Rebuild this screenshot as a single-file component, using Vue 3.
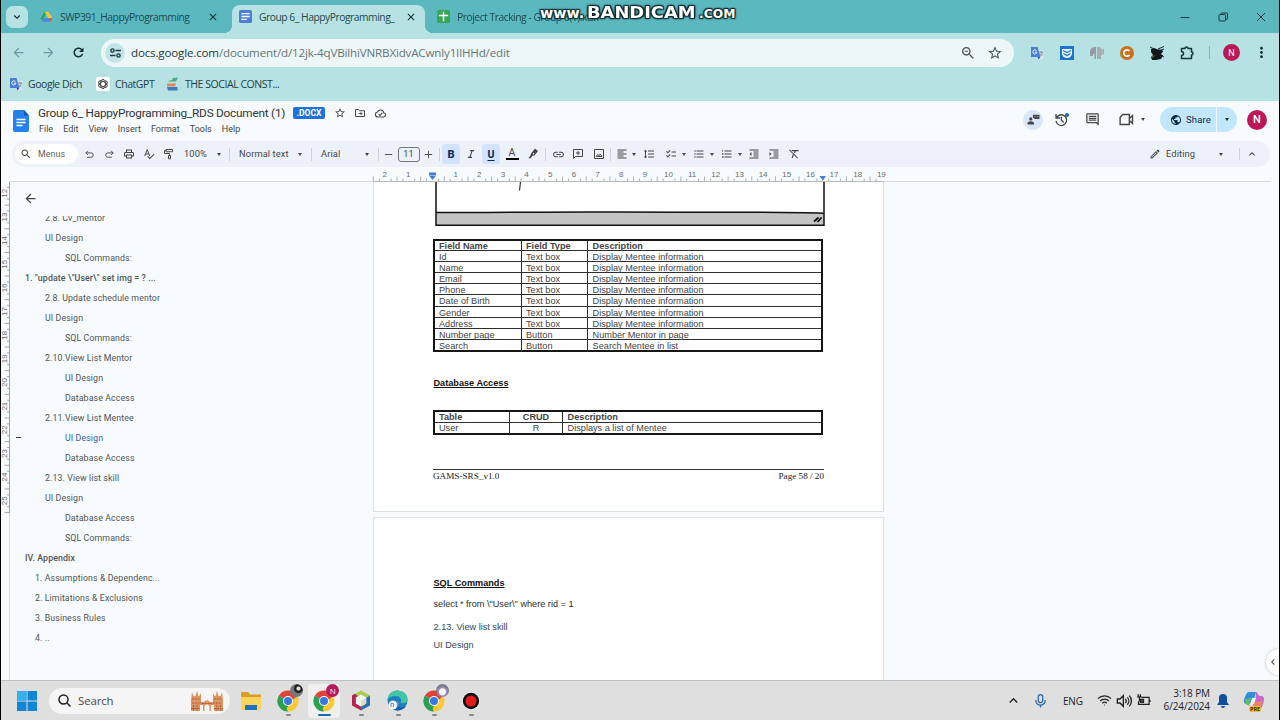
<template>
  <div class="screen">
    <!-- tab strip -->
    <div class="tab-strip">
      <button class="tab-search"><Ico name="expand" :size="12" /></button>
      <div class="tab first">
        <svg class="favicon" viewBox="0 0 24 24">
          <path fill="#2aa35a" d="M8 3h4l-7.500 18L1 15.500z" />
          <path fill="#f6c33c" d="M8.500 3h7L23 15h-7.500z" />
          <path fill="#4a86e8" d="M8 15h15l-4 6.500H4.500z" />
          <path fill="#e2583e" d="M16 15h7l-4 6.500z" />
        </svg>
        <span class="tab-title">SWP391_HappyProgramming</span>
        <Ico name="close" :size="12" />
      </div>
      <div class="tab active">
        <svg class="favicon" viewBox="0 0 14 14">
          <rect width="14" height="14" rx="2" fill="#4b7fd6" />
          <path d="M2.500 4h9M2.500 7h9M2.500 10h6" stroke="#fff" stroke-width="1.400" />
        </svg>
        <span class="tab-title">Group 6_ HappyProgramming_</span>
        <Ico name="close" :size="12" />
      </div>
      <div class="tab third">
        <svg class="favicon" viewBox="0 0 14 14">
          <rect width="14" height="14" rx="2" fill="#35a853" />
          <path d="M2 6h10M7 2v10" stroke="#fff" stroke-width="1.600" />
        </svg>
        <span class="tab-title">Project Tracking - Group 6(1).xlsx</span>
      </div>
      <div class="watermark">
        <span class="wm-www">www.</span><span class="wm-name">BANDICAM</span><span class="wm-com">.COM</span>
      </div>
      <div class="window-buttons">
        <svg viewBox="0 0 12 12"><path d="M1.500 6.500h9" /></svg>
        <svg viewBox="0 0 12 12">
          <rect x="2" y="3.500" width="6.500" height="6.500" rx="1" />
          <path d="M4 3.500V3a1 1 0 011-1h4.500a1 1 0 011 1v4.500a1 1 0 01-1 1H9" />
        </svg>
        <svg viewBox="0 0 12 12"><path d="M2 2l8 8M10 2l-8 8" /></svg>
      </div>
    </div>

    <!-- address bar -->
    <div class="nav-bar">
      <Ico name="back" :size="15" class="dim" />
      <Ico name="forward" :size="15" class="dim" />
      <Ico name="reload" :size="15" />
      <div class="omnibox">
        <span class="site-info">
          <svg width="11" height="10" viewBox="0 0 11 10">
            <g fill="none" stroke="#1f3a3c" stroke-width="1.400">
              <circle cx="2.500" cy="2.500" r="1.600" />
              <path d="M5.500 2.500H11M0 7.500h5.500" />
              <circle cx="8.500" cy="7.500" r="1.600" />
            </g>
          </svg>
        </span>
        <span class="url"><b>docs.google.com</b>/document/d/12jk-4qVBilhiVNRBXidvACwnly1IlHHd/edit</span>
        <Ico name="zoomOut" :size="16" />
        <Ico name="star" :size="16" />
      </div>
      <div class="extensions">
        <TranslateIcon />
        <svg viewBox="0 0 14 14">
          <rect width="14" height="14" fill="#1d74cf" />
          <path d="M2 3h10v4.500a5 4.500 0 01-10 0z" fill="#e8f4ff" />
          <path d="M3 4.500l4 2 4-2M3.500 7.500L7 9.500l3.500-2" fill="none" stroke="#1d74cf" stroke-width="1.200" />
        </svg>
        <svg viewBox="0 0 14 14">
          <path d="M6 1v12H4.500V8H3v2H0V6a5 5 0 016-5z" fill="#939a9d" />
          <path d="M7 1c4-.500 5 2 5.500 4v4H11v4H7z" fill="#a9adb0" />
          <path d="M13.300 3v5" stroke="#939a9d" />
        </svg>
        <svg viewBox="0 0 14 14">
          <circle cx="7" cy="7" r="7" fill="#c9701a" />
          <path d="M9.500 5a3.200 3.200 0 100 4" fill="none" stroke="#fff" stroke-width="1.700" />
        </svg>
        <svg viewBox="0 0 14 14">
          <path d="M1 3l3-1 4 1.500h4l1 2-2 2.500 2 2-2 3-5 1H2l-1-3 2-2-2-3z" fill="#111a1b" />
          <path d="M8 3l6-2.500M10 5l4-2M0 1l3 1.500M12 9l2 2.500" stroke="#223" />
          <path d="M2.500 11.500l1.500-2" stroke="#e0905c" />
        </svg>
        <svg viewBox="0 0 14 14">
          <path
            d="M1.500 2.500h3.500a1.500 1.500 0 013 0h3.500v3.500a1.500 1.500 0 010 3v3.500h-10v-3a2 2 0 000-4z"
            fill="none"
            stroke="#173537"
            stroke-width="1.500"
            stroke-linejoin="round"
          />
        </svg>
      </div>
      <span class="bar-sep"></span>
      <span class="avatar small">N</span>
      <Ico name="more" :size="17" class="more" />
    </div>

    <!-- bookmarks -->
    <div class="bookmarks">
      <TranslateIcon />
      <span class="bm-dich">Google Dịch</span>
      <svg viewBox="0 0 14 14">
        <rect width="14" height="14" rx="2" fill="#fff" />
        <g fill="none" stroke="#3c4143" stroke-width=".9">
          <ellipse cx="7" cy="7" rx="2.400" ry="4.700" />
          <ellipse cx="7" cy="7" rx="2.400" ry="4.700" transform="rotate(60 7 7)" />
          <ellipse cx="7" cy="7" rx="2.400" ry="4.700" transform="rotate(120 7 7)" />
        </g>
      </svg>
      <span class="bm-gpt">ChatGPT</span>
      <svg viewBox="0 0 14 14">
        <path d="M2 4l4-1 1-2 5-.500-2 4H3z" fill="#52a884" />
        <path d="M1 6.500h9l-1 3H1z" fill="#e08657" />
        <path d="M1 10h10.500v3.500H2z" fill="#3f7cc4" />
      </svg>
      <span class="bm-social">THE SOCIAL CONST...</span>
    </div>

    <!-- document header -->
    <div class="doc-header">
      <svg class="doc-logo" viewBox="0 0 16 22">
        <path d="M2 0h9l5 5.500V20a2 2 0 01-2 2H2a2 2 0 01-2-2V2a2 2 0 012-2z" fill="#2680ea" />
        <path d="M11 0l5 5.500h-5z" fill="#1457b8" />
        <path d="M3.500 9.500h9M3.500 12.500h9M3.500 15.500h6" stroke="#fff" stroke-width="1.300" />
      </svg>
      <div class="doc-names">
        <div class="title-row">
          <span class="doc-title">Group 6_ HappyProgramming_RDS Document (1)</span>
          <span class="docx">.DOCX</span>
          <Ico name="star" :size="12" />
          <Ico name="folder" :size="12" stroked />
          <Ico name="cloud" :size="13" stroked />
        </div>
        <div class="menu-row">
          <span v-for="item in menus" :key="item">{{ item }}</span>
        </div>
      </div>
      <div class="header-actions">
        <span class="presence"><Ico name="present" :size="13" /></span>
        <span class="history"><Ico name="history" :size="16" /></span>
        <Ico name="chat" :size="15" />
        <Ico name="camera" :size="17" stroked class="camera" />
        <i class="caret"></i>
        <div class="share">
          <Ico name="globe" :size="12" />
          <span class="share-text">Share</span>
          <span class="share-more"><i class="caret"></i></span>
        </div>
        <span class="avatar large">N</span>
      </div>
    </div>

    <!-- formatting toolbar -->
    <div class="toolbar">
      <div class="menus-chip"><Ico name="search" :size="12" />Menus</div>
      <span v-for="name in ['undo', 'redo']" :key="name" class="tb arrow"><Ico :name="name" :size="11" stroked /></span>
      <span v-for="name in ['print', 'spell']" :key="name" class="tb"><Ico :name="name" :size="12" /></span>
      <span class="tb"><Ico name="paint" :size="12" stroked /></span>
      <div class="group zoom"><span>100%</span><i class="caret"></i></div>
      <div class="group style"><span>Normal text</span><i class="caret"></i></div>
      <div class="group font"><span>Arial</span><i class="caret"></i></div>
      <div class="group size">
        <Ico name="minus" :size="11" /><span class="size-box">11</span><Ico name="plus" :size="11" />
      </div>
      <div class="group marks">
        <span class="tb on bold">B</span>
        <span class="tb"><Ico name="italic" :size="12" /></span>
        <span class="tb on under">U</span>
        <span class="tb colour"><span>A</span></span>
        <span class="tb"><Ico name="marker" :size="12" /></span>
      </div>
      <div class="group insert">
        <span class="tb"><Ico name="link" :size="13" /></span>
        <span class="tb"><Ico name="addComment" :size="12" stroked /></span>
        <span class="tb picture"><Ico name="image" :size="12" stroked /></span>
      </div>
      <div class="group para">
        <span class="tb"><Ico name="align" :size="12" /></span><i class="caret"></i>
        <span class="tb spacing"><Ico name="lineHeight" :size="12" /></span>
        <span class="tb check"><Ico name="checklist" :size="12" /></span><i class="caret"></i>
        <span class="tb list"><Ico name="bullets" :size="12" /></span><i class="caret"></i>
        <span class="tb list"><Ico name="numbers" :size="12" /></span><i class="caret"></i>
        <span class="tb outdent"><Ico name="outdent" :size="12" /></span>
        <span class="tb"><Ico name="indent" :size="12" /></span>
        <span class="tb"><Ico name="clear" :size="12" /></span>
      </div>
      <div class="mode">
        <Ico name="edit" :size="12" /><span>Editing</span><i class="caret"></i>
        <span class="collapse"><Ico name="collapse" :size="12" /></span>
      </div>
    </div>

    <!-- horizontal ruler -->
    <svg class="h-ruler" width="1278" height="15" viewBox="1 167 1278 15">
      <g stroke="#9aa0a3" stroke-width=".8">
        <path v-for="t in hTicks" :key="t.pos" :d="`M${t.pos} 181v-${t.len}`" />
      </g>
      <text v-for="n in hNumbers" :key="n.x" :x="n.x" y="177" class="ruler-number">{{ n.label }}</text>
      <path d="M9 181.500H373M884 181.500h387" stroke="#d3dadb" />
      <path d="M373 181.500h511" stroke="#b4bbbd" />
      <path d="M429 172.500h7v3l-3.500 4.500-3.500-4.500z" fill="#3d7fd0" />
      <path d="M429 175.500h7" stroke="#b7d3f2" stroke-width=".7" />
      <path d="M819.500 176h6.500l-3.250 4.500z" fill="#3d7fd0" />
    </svg>

    <!-- workspace -->
    <div class="workspace">
      <svg class="v-ruler" width="9" height="498" viewBox="1 182 9 498">
        <g stroke="#8f9699" stroke-width=".8">
          <path v-for="t in vTicks" :key="t.pos" :d="`M10 ${t.pos}h-${t.len}`" />
        </g>
        <text
          v-for="n in vNumbers"
          :key="n.y"
          :transform="`translate(6.500 ${n.y}) rotate(-90)`"
          class="ruler-number"
        >{{ n.label }}</text>
        <path d="M9.500 182v331" stroke="#9aa1a3" />
        <path d="M9.500 513v167" stroke="#dadfe0" />
      </svg>

      <aside class="outline">
        <Ico name="back" :size="15" class="outline-back" />
        <div class="outline-list">
          <div
            v-for="(item, i) in outline"
            :key="i"
            :class="['outline-item', 'level-' + item.level, { current: item.current }]"
          >{{ item.text }}</div>
        </div>
      </aside>

      <main class="pages">
        <section class="page page-one">
          <svg class="sketch" width="392" height="45" viewBox="434 182 392 45">
            <path d="M436 212.500c60 .700 90-.900 180-.500s150-.300 208 1V225l-388 .300z" fill="#c4c4c4" />
            <path
              d="M436 182v43.300c130-.600 250 .500 388-.100V182M436 212.400c60 .700 90-.800 180-.400s150-.400 208 1.200"
              fill="none"
              stroke="#111"
              stroke-width="1.500"
            />
            <path d="M814 221.500l4.500-4M817.500 222l4-4.500" stroke="#111" stroke-width="1.700" />
            <path d="M520.500 182l-1 8.500" stroke="#333" stroke-width="1.200" />
          </svg>

          <div class="grid fields">
            <div v-for="(row, i) in fields" :key="i" :class="['row', { head: i === 0 }]">
              <span v-for="(cell, j) in row" :key="j">{{ cell }}</span>
            </div>
          </div>

          <h4 class="heading">Database Access</h4>

          <div class="grid access">
            <div class="row head"><span>Table</span><span>CRUD</span><span>Description</span></div>
            <div class="row"><span>User</span><span>R</span><span>Displays a list of Mentee</span></div>
          </div>

          <footer class="page-footer"><span>GAMS-SRS_v1.0</span><span>Page 58 / 20</span></footer>
        </section>

        <section class="page page-two">
          <h4 class="heading">SQL Commands</h4>
          <p class="query">select * from \"User\" where rid = 1</p>
          <p class="sub">2.13. View list skill</p>
          <p class="sub last">UI Design</p>
        </section>
      </main>
      <button class="side-toggle"><Ico name="left" :size="12" /></button>
    </div>

    <!-- taskbar -->
    <div class="taskbar">
      <svg class="windows" viewBox="0 0 20 20">
        <path d="M0 0h9.500v9.500H0zM10.500 0H20v9.500h-9.500zM0 10.500h9.500V20H0zM10.500 10.500H20V20h-9.500z" fill="#1485d6" />
        <path d="M0 0h9.500v9.500H0z" fill="#35b2ee" />
      </svg>
      <div class="task-search">
        <svg width="13" height="13" viewBox="0 0 13 13" fill="none" stroke="#222" stroke-width="1.500">
          <circle cx="5.500" cy="5.500" r="4.500" /><path d="M9 9l3.500 3.500" />
        </svg>
        <span>Search</span>
        <svg class="castle" viewBox="0 0 34 20">
          <path
            d="M1 20V9L2 1l1.500 4h2L7 0l1.500 5h1L11 2v9h3a3.500 3.500 0 016 0h3V2l1.500 3h1L27 0l1.500 5h2L32 1l1 8v11h-9v-6h-3v6h-1.500v-4a2.500 2.500 0 00-5 0v4H13v-6h-3v6z"
            fill="#dd9662"
          />
          <path
            d="M2 8h8M24 8h8M2 12h9M23 12h9M3.500 14v6M7 14v6M27 14v6M30.500 14v6M12 12.500h10M1 17.500h9M24 17.500h9"
            stroke="#a9532f"
            stroke-width=".9"
            stroke-dasharray="2 .8"
          />
        </svg>
      </div>
      <div class="apps">
        <div class="app">
          <svg width="22" height="20" viewBox="0 0 22 20">
            <path d="M1 2a1 1 0 011-1h6l2 2.500h10a1 1 0 011 1V18H1z" fill="#d99e23" />
            <path d="M1 6h20v11.500a1.500 1.500 0 01-1.500 1.500h-17A1.500 1.500 0 011 17.500z" fill="#fbd45c" />
            <path d="M5 14h12v5H5z" fill="#1f70bd" />
          </svg>
        </div>
        <div class="app running"><ChromeIcon /><span class="badge dark"></span></div>
        <div class="app running focused"><ChromeIcon /><span class="badge pink">N</span></div>
        <div class="app running">
          <svg width="20" height="21" viewBox="0 0 20 21">
            <path d="M10 .5L1 5.500v5h4V8l5-3 5 3v2.500h4v-5z" fill="#a9ce4d" />
            <path d="M1 5.500v10l9 5v-4.300L5 13.300V7.500l2-1.200-3-2.500z" fill="#b3244f" />
            <path d="M19 5.500v10l-9 5v-4.300l5-2.900V8z" fill="#2a6fb4" />
            <path d="M10 4.500l5.200 3v6l-5.200 3-5.200-3v-6z" fill="#f3f6ec" />
            <path d="M10 10.500l5.200-3v6l-5.200 3z" fill="#d6dfcb" />
          </svg>
        </div>
        <div class="app running">
          <svg width="21" height="21" viewBox="0 0 21 21">
            <circle cx="10.500" cy="10.500" r="10" fill="#1c7fc4" />
            <path d="M.5 10C1 4 5 .5 10.500.5c6 0 10 4 10 8.500 0 4-4 5-7 4 2-4-1-7-5-7-4 0-7 2-8 4z" fill="#42c5a3" />
            <path d="M8 10c-2 6 5 9 11 6-3 5-11 6-15 2-3-4-1-8 4-8z" fill="#1560a8" />
            <circle cx="6" cy="15" r="4.500" fill="#eef3f5" />
            <path d="M4 17v-4l3 1-1 3M9 12l3 1-2 3" fill="none" stroke="#6c93b3" />
          </svg>
        </div>
        <div class="app running"><ChromeIcon /><span class="badge grey"></span></div>
        <div class="app running">
          <svg width="18" height="18" viewBox="0 0 18 18">
            <circle cx="9" cy="9" r="8.800" fill="#fff" />
            <circle cx="9" cy="9" r="8.200" fill="#111" />
            <circle cx="9" cy="9" r="5.500" fill="#e21b1b" />
          </svg>
        </div>
      </div>
      <div class="tray">
        <Ico name="collapse" :size="17" />
        <Ico name="mic" :size="15" stroked class="mic" />
        <span class="lang">ENG</span>
        <Ico name="wifi" :size="15" stroked />
        <Ico name="volume" :size="16" stroked />
        <Ico name="battery" :size="15" stroked />
        <div class="clock"><span>3:18 PM</span><span>6/24/2024</span></div>
        <svg class="bell" width="12" height="14" viewBox="0 0 12 14">
          <path d="M6 0a4 4 0 014 4v4l2 3H0l2-3V4a4 4 0 014-4zM4 12h4a2 2 0 01-4 0z" fill="#0d4f9e" />
        </svg>
        <div class="copilot">
          <svg width="20" height="18" viewBox="0 0 20 18">
            <path d="M5 0h7l-3 11-4 1H2C-1 11 0 7 1 5c1-3 2-5 4-5z" fill="#2f8fd8" />
            <path d="M1 7l6-1-2 8-3-2z" fill="#63bd5e" />
            <path d="M12 0c2 0 2 4 4 4h2c3 1 2 5 1 8-1 3-2 5-4 5H8l4-13z" fill="#c667d4" />
            <path d="M10 10l9-1-3 8H8z" fill="#f08460" />
            <path d="M8 6h4l-2 6H6z" fill="#f4f0f7" />
          </svg>
          <span>PRE</span>
        </div>
      </div>
    </div>
  </div>
</template>

<script setup>
import { h } from "vue";

// 24px icon paths
const paths = {
  expand: "M16.600 8.200L12 12.800 7.400 8.200 5.700 9.900 12 16.200l6.300-6.300z",
  collapse: "M12 8l-6 6 1.410 1.410L12 10.830l4.590 4.580L18 14z",
  left: "M15.410 7.410L14 6l-6 6 6 6 1.410-1.410L10.830 12z",
  close: "M19 6.600L17.400 5 12 10.400 6.600 5 5 6.600 10.400 12 5 17.400 6.600 19 12 13.600 17.400 19 19 17.400 13.600 12z",
  back: "M20 11H7.830l5.590-5.590L12 4l-8 8 8 8 1.410-1.410L7.830 13H20v-2z",
  forward: "M12 4l-1.410 1.410L16.170 11H4v2h12.170l-5.580 5.590L12 20l8-8z",
  reload:
    "M17.650 6.350C16.200 4.900 14.210 4 12 4c-4.420 0-7.990 3.580-7.990 8s3.570 8 7.990 8c3.730 0 6.840-2.550 7.730-6h-2.500c-.82 2-2.800 3.600-5.230 3.600-3.100 0-5.600-2.500-5.600-5.600s2.500-5.600 5.600-5.600c1.560 0 2.900.6 3.900 1.700L13 11h7V4l-2.350 2.350z",
  more: "M12 8c1.100 0 2-.9 2-2s-.9-2-2-2-2 .9-2 2 .9 2 2 2zm0 2c-1.100 0-2 .9-2 2s.9 2 2 2 2-.9 2-2-.9-2-2-2zm0 6c-1.100 0-2 .9-2 2s.9 2 2 2 2-.9 2-2-.9-2-2-2z",
  search:
    "M15.500 14h-.79l-.28-.27C15.410 12.590 16 11.110 16 9.500 16 5.910 13.090 3 9.500 3S3 5.910 3 9.500 5.910 16 9.500 16c1.610 0 3.090-.59 4.230-1.570l.27.28v.79l5 4.990L20.490 19l-4.990-5zm-6 0C7.010 14 5 11.990 5 9.500S7.010 5 9.500 5 14 7.010 14 9.500 11.990 14 9.500 14z",
  zoomOut:
    "M15.500 14h-.79l-.28-.27C15.410 12.590 16 11.110 16 9.500 16 5.910 13.090 3 9.500 3S3 5.910 3 9.500 5.910 16 9.500 16c1.610 0 3.090-.59 4.230-1.570l.27.28v.79l5 4.990L20.490 19l-4.990-5zm-6 0C7.010 14 5 11.990 5 9.500S7.010 5 9.500 5 14 7.010 14 9.500 11.990 14 9.500 14zM7 8.700h5v1.600H7z",
  star: "M22 9.240l-7.190-.62L12 2 9.190 8.630 2 9.240l5.460 4.730L5.820 21 12 17.270 18.180 21l-1.630-7.030L22 9.240zM12 15.400l-3.760 2.270 1-4.280-3.320-2.880 4.380-.38L12 6.100l1.710 4.040 4.380.38-3.320 2.880 1 4.280L12 15.400z",
  folder: "M3 5h6l2 2.500h10V19H3zM9 13.200h7M13.500 10.500l2.700 2.700-2.700 2.700",
  cloud: "M7 18.500a4.700 4.700 0 01-.6-9.300 6 6 0 0111.500 1.400A4 4 0 0118 18.500zM8.500 13l2.500 2.500 4.500-4.500",
  undo: "M8.500 4L4 8.500 8.500 13M4 8.500h11.500a4.700 4.700 0 010 9.500H7",
  redo: "M15.500 4L20 8.500 15.500 13M20 8.500H8.500a4.700 4.700 0 000 9.500H17",
  print:
    "M19 8h-1V3H6v5H5c-1.660 0-3 1.340-3 3v6h4v4h12v-4h4v-6c0-1.660-1.340-3-3-3zM8 5h8v3H8V5zm8 12v2H8v-4h8v2zm2-2v-2H6v2H4v-4c0-.55.45-1 1-1h14c.55 0 1 .45 1 1v4h-2z",
  spell:
    "M12.450 16h2.090L9.430 3H7.570L2.460 16h2.090l1.120-3h5.640l1.140 3zm-6.020-5L8.500 5.480 10.570 11H6.430zm15.160.59l-8.090 8.090L9.830 16l-1.410 1.410 5.090 5.090L23 13l-1.410-1.410z",
  paint: "M6 3h13v4.500H6zM6 5H3v6h10v4M11 15h4v6.500h-4z",
  minus: "M4 11h16v2H4z",
  plus: "M20 13h-7v7h-2v-7H4v-2h7V4h2v7h7z",
  italic: "M10 4v2.500h2.700l-3.700 11H6V20h8v-2.500h-2.700l3.700-11H18V4z",
  marker: "M16 1l6 5-7 9-4 .5L7 21l-4-1 4-5 1-4zM11 11.500l2.300 1.900L15 11.300l-2.200-1.900z",
  link: "M3.900 12c0-1.710 1.390-3.100 3.100-3.100h4V7H7c-2.760 0-5 2.240-5 5s2.240 5 5 5h4v-1.900H7c-1.710 0-3.100-1.390-3.100-3.100zM8 13h8v-2H8v2zm9-6h-4v1.900h4c1.710 0 3.100 1.390 3.100 3.100s-1.390 3.100-3.100 3.100h-4V17h4c2.760 0 5-2.240 5-5s-2.240-5-5-5z",
  addComment: "M3 3h18v14H7l-4 4zM12 6v8M8 10h8",
  image: "M3 3h18v18H3zM6.500 17l3-4 2.500 2.500 2.500-3.500 3.500 5z",
  align: "M15 15H3v2h12v-2zm0-8H3v2h12V7zM3 13h18v-2H3v2zm0 8h18v-2H3v2zM3 3v2h18V3H3z",
  lineHeight:
    "M6 7h2.500L5 3.500 1.500 7H4v10H1.500L5 20.500 8.500 17H6V7zm4-2v2h12V5H10zm0 14h12v-2H10v2zm0-6h12v-2H10v2z",
  checklist:
    "M22 7h-9v2h9V7zm0 8h-9v2h9v-2zM5.540 11L2 7.460l1.410-1.410 2.120 2.120 4.240-4.240 1.410 1.410L5.540 11zm0 8L2 15.460l1.410-1.410 2.120 2.120 4.240-4.240 1.410 1.410L5.540 19z",
  bullets:
    "M4 10.500c-.83 0-1.500.67-1.500 1.500s.67 1.500 1.500 1.500 1.500-.67 1.500-1.500-.67-1.500-1.500-1.500zm0-6c-.83 0-1.500.67-1.500 1.500S3.170 7.500 4 7.500 5.500 6.830 5.500 6 4.830 4.500 4 4.500zm0 12c-.83 0-1.500.68-1.500 1.500s.68 1.500 1.500 1.500 1.500-.68 1.500-1.500-.67-1.500-1.500-1.500zM7 19h14v-2H7v2zm0-6h14v-2H7v2zm0-8v2h14V5H7z",
  numbers:
    "M2 17h2v.5H3v1h1v.5H2v1h3v-4H2v1zm1-9h1V4H2v1h1v3zm-1 3h1.800L2 13.100v.9h3v-1H3.200L5 10.900V10H2v1zm5-6v2h14V5H7zm0 14h14v-2H7v2zm0-6h14v-2H7v2z",
  outdent: "M11 17h10v-2H11v2zm-8-5l4 4V8l-4 4zm0 9h18v-2H3v2zM3 3v2h18V3H3zm8 6h10V7H11v2zm0 4h10v-2H11v2z",
  indent: "M3 21h18v-2H3v2zM3 8v8l4-4-4-4zm8 9h10v-2H11v2zM3 3v2h18V3H3zm8 6h10V7H11v2zm0 4h10v-2H11v2z",
  clear:
    "M3.270 3L2 4.270l7.970 7.970L7 20h2.500l2.200-6L18.730 21 20 19.730zM7 4v.5L8.900 6.300h4.200l-1 2.500 1.700 1.700 1.600-4.200H21V4z",
  edit: "M14.060 9.020l.92.92L5.920 19H5v-.92l9.060-9.060M17.660 3c-.25 0-.51.1-.7.29l-1.830 1.830 3.750 3.750 1.830-1.830c.39-.39.39-1.020 0-1.410l-2.340-2.340c-.2-.2-.45-.29-.71-.29zm-3.600 3.190L3 17.250V21h3.750L17.810 9.940l-3.750-3.750z",
  present: "M7 8a3 3 0 110 6 3 3 0 010-6zM1 21v-2c0-5 12-5 12 0v2zM11 3h12v8h-9l-1-2h-2zM14 5.500v1h2v-1zM18 5.500v1h3v-1z",
  history:
    "M12.500 3a9 9 0 00-7 3.300V3h-2v7h7V8H7a7 7 0 11-1.500 5.200l-2 .3A9 9 0 1012.500 3zM11.500 7v5.500l4 4 1.400-1.400-3.400-3.400V7z",
  chat: "M21.990 4c0-1.100-.89-2-1.990-2H4c-1.100 0-2 .9-2 2v12c0 1.100.9 2 2 2h14l4 4-.01-18zM20 4v13.170L18.830 16H4V4h16zM6 12h12v2H6zm0-3h12v2H6zm0-3h12v2H6z",
  camera: "M7 5h9v14H3V9zM16 10.500l4.500-4v11l-4.500-4",
  globe:
    "M12 2C6.480 2 2 6.480 2 12s4.480 10 10 10 10-4.480 10-10S17.520 2 12 2zm-1 17.930c-3.950-.49-7-3.850-7-7.930 0-.62.08-1.210.21-1.790L9 15v1c0 1.100.9 2 2 2v1.930zm6.900-2.540c-.26-.81-1-1.390-1.900-1.390h-1v-3c0-.55-.45-1-1-1H8v-2h2c.55 0 1-.45 1-1V7h2c1.100 0 2-.9 2-2v-.41c2.930 1.190 5 4.060 5 7.410 0 2.080-.8 3.970-2.100 5.390z",
  mic: "M12 2.500a3.500 3.500 0 013.500 3.500v6a3.500 3.500 0 01-7 0V6A3.500 3.500 0 0112 2.500zM4.500 11v1a7.500 7.500 0 0015 0v-1M12 19.500V23",
  wifi: "M1.500 9a15 15 0 0121 0M5 12.800a10 10 0 0114 0M8.300 16.300a5.300 5.300 0 017.400 0M11.500 19.500h1",
  volume: "M2 9h4l5-5v16l-5-5H2zM14 9a4.500 4.500 0 010 6M17 6.500a8 8 0 010 11M20 4a12 12 0 010 16",
  battery: "M9 7h12v11H4v-5M22.500 11v3M2 6h7M3.500 2v4M7 2v4M5.500 7v6M7 10h5v5H7zM8 12.500h4",
};

const Ico = (props) =>
  h("svg", { width: props.size, height: props.size, viewBox: "0 0 24 24", class: "ico" }, [
    h(
      "path",
      props.stroked
        ? { d: paths[props.name], fill: "none", stroke: "currentColor", "stroke-width": 2 }
        : { d: paths[props.name], fill: "currentColor", "fill-rule": "evenodd" }
    ),
  ]);
Ico.props = { name: String, size: Number, stroked: Boolean };

const TranslateIcon = () =>
  h("svg", { viewBox: "0 0 14 14" }, [
    h("path", { d: "M6 4h7v9H7z", fill: "#dfe7ee" }),
    h("path", { d: "M1 1h6.500l3 10H1z", fill: "#4a7fd8" }),
    h("path", { d: "M7.500 11l3 0-2 2.500z", fill: "#2f58ad" }),
    h("path", { d: "M6.500 4.800a2 2 0 10.300 1.500H5", fill: "none", stroke: "#fff" }),
    h("path", { d: "M9 6h4M11 5v1.500M12.300 6c-.3 2-1.600 3.300-2.500 4M10 7.500l2.500 2.500", fill: "none", stroke: "#6c7b8f", "stroke-width": 0.8 }),
  ]);

const ChromeIcon = () =>
  h("svg", { width: 22, height: 22, viewBox: "0 0 22 22" }, [
    h("path", { d: "M11 11L1.900 5.700A10.500 10.500 0 0120.100 5.700z", fill: "#dd4437" }),
    h("path", { d: "M11 11L1.900 5.700A10.500 10.500 0 0011 21.500z", fill: "#2d9f50" }),
    h("path", { d: "M11 11l9.100-5.300A10.500 10.500 0 0111 21.500l4-8z", fill: "#fbc934" }),
    h("path", { d: "M11 6h9.200l-6 5z", fill: "#dd4437" }),
    h("path", { d: "M6.600 13.300L11 21.500l4.500-8z", fill: "#fbc934" }),
    h("path", { d: "M2 5.800l4.600 7.700 4.500 2.500-2.500 5A10.500 10.500 0 012 5.800z", fill: "#2d9f50" }),
    h("circle", { cx: 11, cy: 11, r: 5, fill: "#fff" }),
    h("circle", { cx: 11, cy: 11, r: 4, fill: "#3678de" }),
  ]);

const menus = ["File", "Edit", "View", "Insert", "Format", "Tools", "Help"];

const outline = [
  { text: "2.8. Cv_mentor", level: 3 },
  { text: "UI Design", level: 3 },
  { text: "SQL Commands:", level: 4 },
  { text: '1. "update \\"User\\" set img = ? ...', level: 1 },
  { text: "2.8. Update schedule mentor", level: 3 },
  { text: "UI Design", level: 3 },
  { text: "SQL Commands:", level: 4 },
  { text: "2.10.View List Mentor", level: 3 },
  { text: "UI Design", level: 4 },
  { text: "Database Access", level: 4 },
  { text: "2.11.View List Mentee", level: 3 },
  { text: "UI Design", level: 4, current: true },
  { text: "Database Access", level: 4 },
  { text: "2.13. View list skill", level: 3 },
  { text: "UI Design", level: 3 },
  { text: "Database Access", level: 4 },
  { text: "SQL Commands:", level: 4 },
  { text: "IV. Appendix", level: 1 },
  { text: "1. Assumptions & Dependenc...", level: 2 },
  { text: "2. Limitations & Exclusions", level: 2 },
  { text: "3. Business Rules", level: 2 },
  { text: "4. ..", level: 2 },
];

const info = "Display Mentee information";
const fields = [
  ["Field Name", "Field Type", "Description"],
  ...["Id", "Name", "Email", "Phone", "Date of Birth", "Gender", "Address"].map((name) => [name, "Text box", info]),
  ["Number page", "Button", "Number Mentor in page"],
  ["Search", "Button", "Search Mentee in list"],
];

// rulers: one centimetre is 23.65px
const CM = 23.65;
const hTicks = [];
for (let i = -10; i <= 76; i++) {
  if (i % 4 === 0) continue;
  hTicks.push({ pos: 432.5 + (i * CM) / 4, len: i % 2 === 0 ? 4.5 : 2.5 });
}
const hNumbers = [];
for (let n = -2; n <= 19; n++) {
  if (n !== 0) hNumbers.push({ x: 432 + n * CM, label: Math.abs(n) });
}
const vTicks = [];
for (let i = -1; i <= 54; i++) {
  if (i % 4 === 0) continue;
  vTicks.push({ pos: 193.3 + (i * CM) / 4, len: i % 2 === 0 ? 5.5 : 3 });
}
const vNumbers = [];
for (let n = 12; n <= 25; n++) vNumbers.push({ y: 193.3 + (n - 12) * CM, label: n });
</script>

<style>
body {
  margin: 0;
}
</style>

<style scoped>
.screen {
  box-sizing: border-box;
  width: 1280px;
  height: 720px;
  border: solid #000;
  border-width: 0 1px;
  display: flex;
  flex-direction: column;
  overflow: hidden;
  background: #f8fbfd;
  color: #444746;
  font-family: Roboto, sans-serif;
}

svg {
  display: block;
  flex: none;
}

/* tab strip */
.tab-strip {
  position: relative;
  display: flex;
  flex: none;
  height: 33px;
  background: #5bb8bf;
  font: 11px "Open Sans", sans-serif;
  color: #1c4a4e;
}

.tab-search {
  width: 22px;
  height: 22px;
  margin: 6px 0 0 5px;
  padding: 0;
  border: 0;
  border-radius: 7px;
  display: flex;
  align-items: center;
  justify-content: center;
  background: #b6e2e4;
  color: #102b2d;
}

.tab {
  display: flex;
  align-items: center;
  white-space: nowrap;
}

.tab.first {
  width: 204px;
}

.tab.active {
  position: relative;
  width: 193px;
  margin-top: 5px;
  padding-bottom: 5px;
  border-radius: 8px 8px 0 0;
  background: #b6e2e4;
  box-sizing: border-box;
}

.tab.active::before,
.tab.active::after {
  content: "";
  position: absolute;
  bottom: 0;
  width: 8px;
  height: 8px;
}

.tab.active::before {
  left: -8px;
  background: radial-gradient(circle at 0 0, transparent 8px, #b6e2e4 8px);
}

.tab.active::after {
  right: -8px;
  background: radial-gradient(circle at 100% 0, transparent 8px, #b6e2e4 8px);
}

.tab .ico {
  color: #12373a;
}

.favicon {
  width: 13px;
  height: 13px;
  margin-left: 7px;
}

.first .favicon {
  margin-left: 12px;
}

.third .favicon {
  margin-left: 12px;
}

.tab-title {
  width: 146px;
  margin-left: 7px;
  font-size: 10.3px;
  letter-spacing: -0.47px;
}

.first .tab-title {
  width: 147px;
}

.third .tab-title {
  width: 190px;
  mask-image: linear-gradient(90deg, #000 75%, transparent);
}

.watermark {
  position: absolute;
  left: 539px;
  top: 3px;
  display: flex;
  align-items: baseline;
  font-family: "DejaVu Sans", sans-serif;
  font-weight: bold;
  line-height: 20px;
  color: #fff;
  text-shadow:
    -1px -1px 1px #10282b,
    1px -1px 1px #10282b,
    -1px 1px 1px #10282b,
    1px 1px 1px #10282b,
    0 0 3px #10282b;
}

.wm-www {
  width: 47px;
  font-size: 14.3px;
}

.wm-name {
  width: 112px;
  font-size: 15px;
  transform: scaleX(1.19);
  transform-origin: left;
}

.wm-com {
  font-size: 12.3px;
}

.window-buttons {
  margin-left: auto;
  padding-right: 12px;
  display: flex;
  align-items: center;
  gap: 26px;
}

.window-buttons svg {
  width: 12px;
  height: 12px;
  fill: none;
  stroke: #14383b;
}

/* address bar */
.nav-bar {
  display: flex;
  flex: none;
  align-items: center;
  height: 39px;
  padding-left: 10px;
  background: #b6e2e4;
  color: #153235;
}

.nav-bar > .ico {
  margin-right: 15px;
}

.nav-bar > .dim {
  color: #6d9a9d;
}

.omnibox {
  display: flex;
  align-items: center;
  width: 913px;
  height: 28px;
  box-sizing: border-box;
  border-radius: 14px;
  background: #edf7f8;
  font: 12px "Open Sans", sans-serif;
  color: #667577;
  padding: 0 11px 0 4px;
}

.site-info {
  display: flex;
  align-items: center;
  justify-content: center;
  width: 20px;
  height: 20px;
  border-radius: 50%;
  background: #c4e5e7;
}

.url {
  flex: 1;
  margin-left: 6px;
  font-size: 11.6px;
  letter-spacing: -0.17px;
}

.url b {
  font-weight: 400;
  color: #27393b;
}

.omnibox .ico {
  margin-left: 11px;
  color: #465759;
}

.extensions {
  display: flex;
  gap: 16px;
  margin-left: 16px;
}

.extensions svg,
.bookmarks svg {
  width: 14px;
  height: 14px;
}

.bar-sep {
  width: 1px;
  height: 13px;
  margin-left: 15px;
  background: #73bfc5;
}

.avatar {
  display: flex;
  align-items: center;
  justify-content: center;
  flex: none;
  border-radius: 50%;
  background: #bb1858;
  color: #fff;
}

.avatar.small {
  width: 17px;
  height: 17px;
  margin-left: 13px;
  font-size: 9px;
}

.avatar.large {
  width: 20px;
  height: 20px;
  font-size: 11px;
  font-weight: 500;
}

.nav-bar > .more {
  margin: 0 0 0 13px;
}

/* bookmarks */
.bookmarks {
  display: flex;
  flex: none;
  align-items: center;
  height: 29px;
  padding: 0 0 5px 8px;
  box-sizing: border-box;
  background: #b6e2e4;
  font: 10.5px "Open Sans", sans-serif;
  letter-spacing: -0.45px;
  color: #1f4144;
  white-space: nowrap;
}

.bookmarks span {
  margin-left: 5px;
}

.bm-dich {
  width: 68px;
}

.bm-gpt {
  width: 51px;
}

/* document header */
.doc-header {
  display: flex;
  flex: none;
  height: 40px;
  padding-left: 12px;
}

.doc-logo {
  width: 16px;
  height: 22px;
  margin-top: 9px;
}

.doc-names {
  margin-left: 9px;
}

.title-row {
  display: flex;
  align-items: center;
  height: 18px;
  margin-top: 3px;
}

.doc-title {
  width: 247px;
  font-size: 11.8px;
  letter-spacing: -0.23px;
  white-space: nowrap;
  color: #303436;
}

.docx {
  display: flex;
  align-items: center;
  justify-content: center;
  width: 32px;
  height: 12px;
  margin: 0 9px 0 8px;
  border-radius: 2px;
  background: #1f73d6;
  color: #fff;
  font-size: 8.5px;
  font-weight: 700;
}

.title-row .ico {
  margin-right: 8px;
}

.menu-row {
  display: flex;
  gap: 10px;
  height: 14px;
  align-items: center;
  font-size: 9px;
  padding-left: 1px;
}

.header-actions {
  display: flex;
  align-items: center;
  height: 37px;
  margin-left: auto;
  padding-right: 12px;
}

.presence {
  display: flex;
  align-items: center;
  justify-content: center;
  width: 20px;
  height: 20px;
  margin-right: 10px;
  border-radius: 50%;
  background: #d9e5fa;
}

.history {
  position: relative;
  margin-right: 16px;
}

.history::after {
  content: "";
  position: absolute;
  top: 1px;
  right: 0;
  width: 4px;
  height: 4px;
  border-radius: 50%;
  background: #1a63c4;
}

.header-actions > .camera {
  margin: 0 5px 0 18px;
}

.caret {
  flex: none;
  width: 0;
  height: 0;
  margin: 0 0.5px;
  border: 2.5px solid transparent;
  border-top: 3px solid currentColor;
  border-bottom: 0;
}

.header-actions > .caret {
  margin-right: 1.5px;
}

.share {
  display: flex;
  align-items: center;
  width: 77px;
  height: 25px;
  margin: 0 10px 0 14px;
  border-radius: 13px;
  background: #c2e7fd;
  color: #0c2a45;
}

.share .ico {
  margin-left: 10px;
}

.share-text {
  width: 30px;
  margin-left: 4px;
  font-size: 9.6px;
  letter-spacing: 0.1px;
}

.share-more {
  display: flex;
  align-items: center;
  justify-content: center;
  flex: 1;
  height: 100%;
  border-left: 1px solid #f0f9ff;
}

/* formatting toolbar */
.toolbar {
  display: flex;
  flex: none;
  align-items: center;
  height: 26px;
  box-sizing: border-box;
  margin: 0 9px 0 11px;
  padding-left: 3px;
  background: #edf2fa;
  border-radius: 13px;
  font-size: 9.3px;
  letter-spacing: 0.1px;
}

.menus-chip {
  display: flex;
  align-items: center;
  width: 63px;
  height: 20px;
  margin-right: 1px;
  box-sizing: border-box;
  padding-left: 5px;
  border-radius: 10px;
  background: #fff;
  font-size: 8.8px;
  color: #5c6163;
}

.menus-chip .ico {
  margin-right: 6px;
  color: #444;
}

.tb {
  display: flex;
  align-items: center;
  justify-content: center;
  flex: none;
  width: 20px;
  height: 20px;
}

.tb.arrow {
  box-sizing: border-box;
  padding-top: 1px;
}

.tb.on {
  width: 18px;
  margin: 0 1px;
  border-radius: 3px;
  background: #d3e3fd;
  color: #062b5f;
}

.group {
  display: flex;
  align-items: center;
  flex: none;
  height: 20px;
  position: relative;
}

.group + .group::before {
  content: "";
  position: absolute;
  left: 0;
  top: 4px;
  width: 1px;
  height: 13px;
  background: #ccd3da;
}

.zoom,
.style,
.font {
  box-sizing: border-box;
  justify-content: space-between;
}

.zoom span,
.style span,
.font span {
  margin-top: -1px;
}

.zoom {
  width: 50px;
  padding: 0 8px 0 5px;
}

.style {
  width: 82px;
  padding: 0 9px 0 10px;
}

.font {
  width: 67px;
  padding: 0 9px 0 10px;
}

.size {
  width: 61px;
  box-sizing: border-box;
  padding: 0 5px;
  justify-content: space-between;
}

.size-box {
  width: 20px;
  height: 13px;
  line-height: 13px;
  border: 1px solid #747775;
  border-radius: 3px;
  text-align: center;
  font-size: 9px;
}

.marks {
  width: 106px;
  box-sizing: border-box;
  padding-left: 2px;
}

.bold {
  font-size: 11px;
  font-weight: 800;
}

.under {
  font-size: 10.5px;
  font-weight: 700;
  text-decoration: underline;
  text-underline-offset: 2px;
}

.colour {
  margin: 0 1px;
}

.colour span {
  width: 13px;
  height: 10px;
  line-height: 9px;
  border-bottom: 2px solid #000;
  text-align: center;
  font-size: 10.5px;
}

.insert {
  width: 65px;
  box-sizing: border-box;
  padding-left: 3px;
}

.insert .picture {
  margin-left: 1px;
}

.para {
  padding-left: 2px;
}

.para .spacing {
  margin: 0 1px 0 3px;
}

.para .check {
  margin-left: 1px;
}

.para .list {
  margin-left: 3px;
}

.para .outdent {
  margin-left: 2px;
}

.para .tb:first-child {
  width: 19px;
}

.mode {
  display: flex;
  align-items: center;
  margin-left: auto;
  width: 121px;
}

.mode > span:nth-of-type(1) {
  width: 52px;
  margin: -1px 0 0 5px;
}

.mode .collapse {
  margin-left: 16px;
  padding-left: 6px;
  border-left: 1px solid #ccd3da;
}

.ruler-number {
  font: 8px "Liberation Sans", sans-serif;
  fill: #686d6f;
  text-anchor: middle;
}

/* workspace */
.workspace {
  position: relative;
  display: flex;
  flex: none;
  height: 498px;
  overflow: hidden;
}

.outline {
  display: flex;
  flex-direction: column;
  width: 363px;
}

.outline-back {
  margin: 9px 0 10px 13px;
}

.outline-list {
  flex: 1;
  overflow: hidden;
}

.outline-item {
  position: relative;
  height: 20px;
  line-height: 20px;
  font-size: 8.8px;
  letter-spacing: 0.1px;
  white-space: nowrap;
  color: #4f5456;
}

.outline-item:first-child {
  margin-top: -8px;
}

.level-1 {
  padding-left: 15px;
  font-weight: 500;
}

.level-2 {
  padding-left: 25px;
}

.level-3 {
  padding-left: 35px;
}

.level-4 {
  padding-left: 55px;
}

.current {
  color: #2f62ad;
}

.current::before {
  content: "";
  position: absolute;
  left: 6px;
  top: 9px;
  width: 5px;
  height: 1px;
  background: #333;
}

.pages {
  width: 511px;
  display: flex;
  flex-direction: column;
  gap: 5px;
}

.page {
  box-sizing: border-box;
  flex: none;
  width: 511px;
  padding: 0 60px;
  border: 1px solid #dbe2e4;
  background: #fff;
  font: 9.17px/11px "Liberation Sans", sans-serif;
  color: #444;
}

.page-one {
  height: 330px;
  border-top: 0;
}

.page-two {
  height: 200px;
  padding: 59px 59px 0 59.5px;
}

.grid {
  box-sizing: border-box;
  width: 390px;
  margin-left: -1px;
  border: 2px solid #161616;
}

.row {
  box-sizing: border-box;
  display: grid;
  height: 11.2px;
  border-bottom: 1px solid #2d2d2d;
}

.row:last-child {
  height: 10.2px;
  border-bottom: 0;
}

.row span {
  padding-left: 4px;
  border-left: 1px solid #2d2d2d;
  line-height: 12px;
  white-space: nowrap;
}

.row span:last-child {
  padding-left: 4.6px;
}

.row span:first-child {
  border-left: 0;
}

.row.head {
  height: 10.2px;
  font-weight: bold;
}

.head span {
  line-height: 10px;
}

.fields {
  margin-top: 11.5px;
}

.fields .row {
  grid-template-columns: 86px 66px 1fr;
}

.access .row {
  grid-template-columns: 74px 53px 1fr;
}

.access span {
  line-height: 11px;
}

.access span:nth-child(2) {
  padding: 0;
  text-align: center;
}

.heading {
  margin: 0;
  width: max-content;
  font-size: 9.17px;
  line-height: 12px;
  color: #111;
  text-decoration: underline;
}

.page-one .heading {
  margin: 24.5px 0 21.5px -0.5px;
}

.page-footer {
  display: flex;
  justify-content: space-between;
  width: 391px;
  margin: 34px 0 0 -1px;
  padding-top: 1px;
  border-top: 1px solid #333;
  font-family: "Liberation Serif", serif;
  color: #222;
}

.page-two p {
  margin: 9px 0 0;
  line-height: 12px;
  color: #2c2c2c;
}

.page-two .sub {
  margin-top: 11px;
  color: #34495f;
}

.page-two .last {
  margin-top: 6px;
}

.side-toggle {
  position: absolute;
  right: -13px;
  bottom: 5px;
  width: 26px;
  height: 26px;
  padding: 0 0 0 1px;
  border: 0;
  border-radius: 50%;
  background: #fff;
  color: #444746;
  box-shadow: 0 0 3px rgba(60, 64, 67, 0.35);
}

/* taskbar */
.taskbar {
  display: flex;
  flex: none;
  align-items: center;
  height: 40px;
  box-sizing: border-box;
  padding-left: 16px;
  border-top: 1px solid #bdbfc0;
  background: #dfdfe0;
  font: 10px "Open Sans", sans-serif;
  color: #222;
}

.windows {
  width: 20px;
  height: 20px;
}

.task-search {
  display: flex;
  align-items: center;
  width: 181px;
  height: 26px;
  margin: 0 1px 0 12px;
  box-sizing: border-box;
  padding: 0 6px 0 9px;
  border-radius: 13px;
  background: #f5f5f5;
  font-size: 11.4px;
  letter-spacing: -0.1px;
  color: #4a4a4a;
}

.task-search span {
  margin-left: 7px;
}

.castle {
  width: 34px;
  height: 20px;
  margin-left: auto;
}

.apps {
  display: flex;
  gap: 4.7px;
  margin-left: 4px;
}

.app {
  position: relative;
  display: flex;
  align-items: center;
  justify-content: center;
  width: 32px;
  height: 34px;
  border-radius: 4px;
}

.app.focused {
  background: #efefef;
}

.app.running::after {
  content: "";
  position: absolute;
  bottom: 2px;
  left: 14px;
  width: 5px;
  height: 2px;
  border-radius: 1px;
  background: #85878a;
}

.app.focused::after {
  left: 10px;
  width: 13px;
  background: #1769b3;
}

.badge {
  position: absolute;
  top: 0;
  right: 1px;
  width: 13px;
  height: 13px;
  line-height: 13px;
  border-radius: 50%;
  text-align: center;
  font-size: 8px;
  color: #fff;
}

.badge.pink {
  background: #bb1858;
}

.badge.dark {
  background: radial-gradient(circle at 65% 35%, #ddd 1.5px, #222 2.5px 4px, #777 5px);
}

.badge.grey {
  background: radial-gradient(circle at 50% 60%, #f5f3fb 3px, #a295c0 4px, #777c88 6px);
}

.tray {
  display: flex;
  align-items: center;
  margin-left: auto;
  padding-right: 15px;
}

.tray .mic {
  margin: 0 15px 0 11px;
  color: #2a64a8;
}

.lang {
  width: 34px;
  letter-spacing: -0.2px;
}

.tray .ico + .ico:not(.mic) {
  margin-left: 4px;
}

.clock {
  display: flex;
  flex-direction: column;
  align-items: flex-end;
  width: 56px;
  margin-left: 3px;
  line-height: 13px;
  letter-spacing: -0.1px;
  margin-top: -2px;
}

.bell {
  margin-left: 7px;
}

.copilot {
  position: relative;
  margin-left: 15px;
}

.copilot span {
  position: absolute;
  left: 5px;
  bottom: -2px;
  padding: 0 1px;
  border-radius: 2px;
  background: #f2bd31;
  color: #352806;
  font-size: 5.5px;
  font-weight: 700;
  line-height: 6px;
}
</style>
